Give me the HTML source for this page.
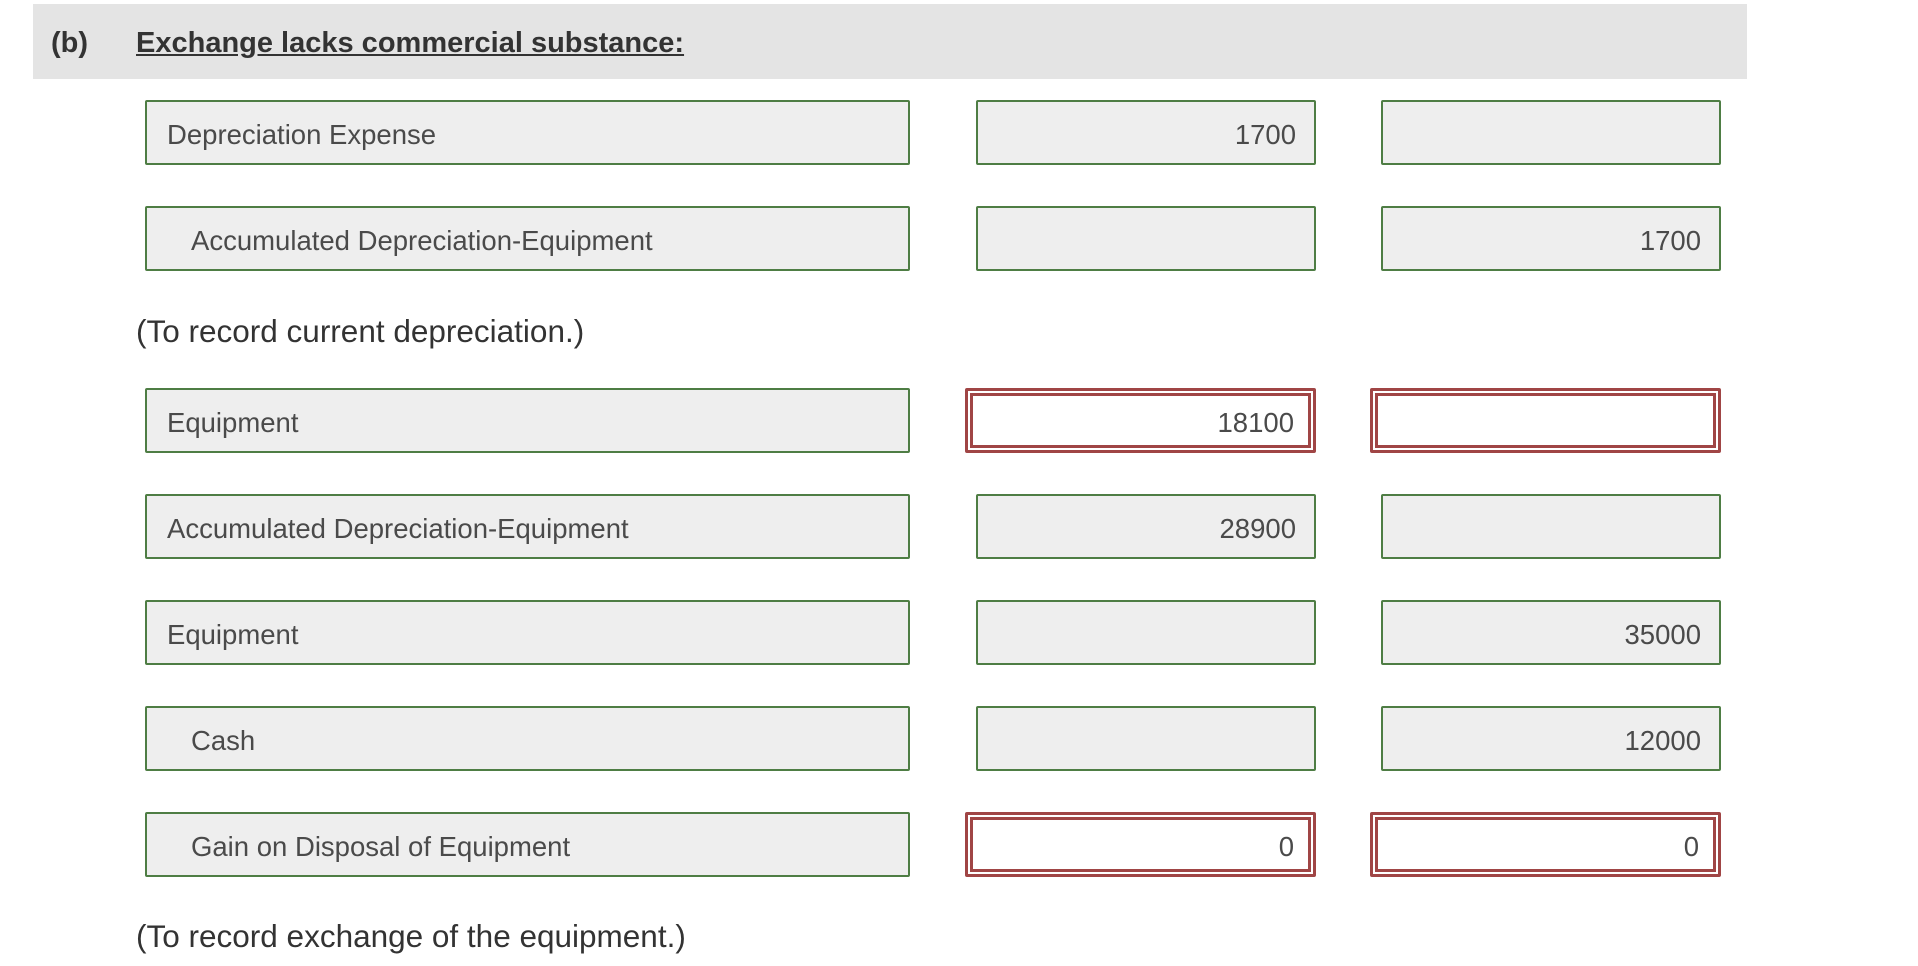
<!DOCTYPE html>
<html><head><style>
body{margin:0;background:#fff;width:1918px;height:966px;position:relative;font-family:"Liberation Sans",sans-serif;color:#444;overflow:hidden}
.hdr{position:absolute;left:33px;top:4px;width:1714px;height:75px;background:#e4e4e4}
.hdr span{position:absolute;top:23px;font-weight:bold;font-size:29px;color:#333}
.b{position:absolute;height:65px;box-sizing:border-box;background:#eee;border:2px solid #4e7d44;border-radius:2px;font-size:27.5px;line-height:65px;color:#4a4a4a}
.l{left:145px;width:765px;padding-left:20px}
.l.i{padding-left:44px}
.m{left:976px;width:340px;text-align:right;padding-right:18px}
.r{left:1381px;width:340px;text-align:right;padding-right:18px}
.red{background:#fff;border:3px double #a04545;border-width:8px;line-height:53px;padding-right:14px}
.m.red{left:965px;width:351px}
.r.red{left:1370px;width:351px}
.t{position:absolute;left:136px;font-size:31.5px;color:#333}
</style></head><body>
<div class="hdr"><span style="left:18px">(b)</span><span style="left:103px;text-decoration:underline">Exchange lacks commercial substance:</span></div>

<div class="b l" style="top:100px">Depreciation Expense</div>
<div class="b m" style="top:100px">1700</div>
<div class="b r" style="top:100px"></div>

<div class="b l i" style="top:206px">Accumulated Depreciation-Equipment</div>
<div class="b m" style="top:206px"></div>
<div class="b r" style="top:206px">1700</div>

<div class="t" style="top:313px">(To record current depreciation.)</div>

<div class="b l" style="top:388px">Equipment</div>
<div class="b m red" style="top:388px">18100</div>
<div class="b r red" style="top:388px"></div>

<div class="b l" style="top:494px">Accumulated Depreciation-Equipment</div>
<div class="b m" style="top:494px">28900</div>
<div class="b r" style="top:494px"></div>

<div class="b l" style="top:600px">Equipment</div>
<div class="b m" style="top:600px"></div>
<div class="b r" style="top:600px">35000</div>

<div class="b l i" style="top:706px">Cash</div>
<div class="b m" style="top:706px"></div>
<div class="b r" style="top:706px">12000</div>

<div class="b l i" style="top:812px">Gain on Disposal of Equipment</div>
<div class="b m red" style="top:812px">0</div>
<div class="b r red" style="top:812px">0</div>

<div class="t" style="top:918px">(To record exchange of the equipment.)</div>
</body></html>
